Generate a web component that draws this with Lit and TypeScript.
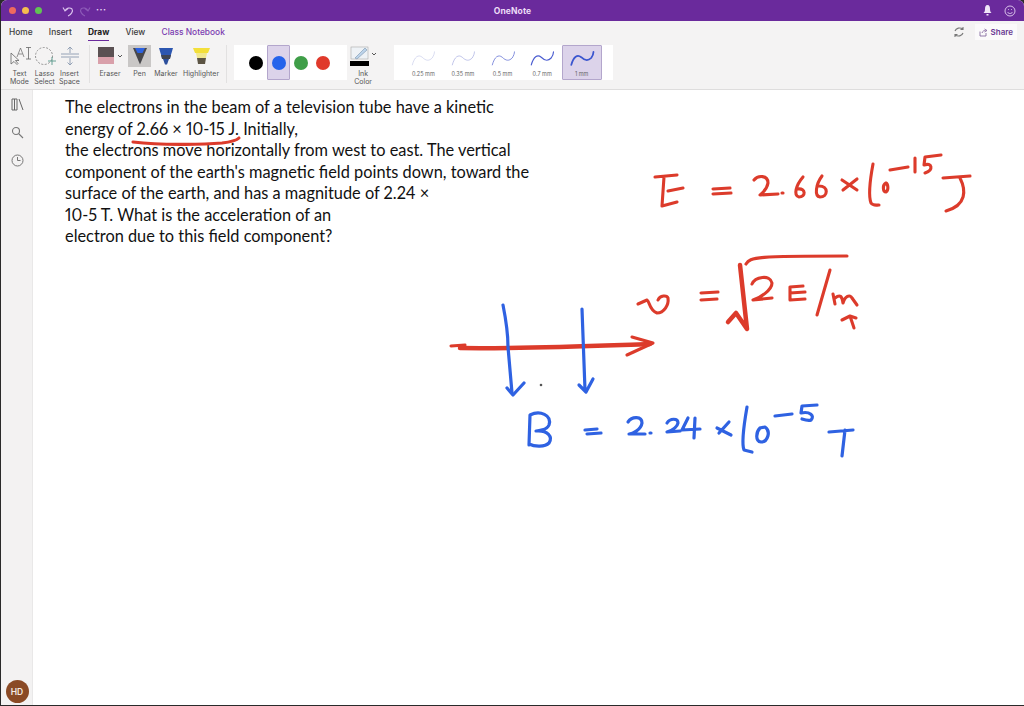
import { LitElement, html, css, svg } from "lit";
import { customElement } from "lit/decorators.js";

const RED = [
  "M133 142C160 145 200 145 222 143C230 142 236 141 239 138",
  "M655 177L677 175M664 177L662 206M668 191L683 188M662 206L677 202",
  "M713 189L730 188M713 194L731 193",
  "M754 180C758 175 768 175 768 183C767 190 762 193 760 195L778 194",
  "M782 193L783 193",
  "M803 177C796 185 793 196 799 197C806 197 806 188 798 189",
  "M822 176C816 184 814 196 820 197C828 197 829 186 819 186",
  "M842 180L857 190M857 179L843 190",
  "M873 164C870 180 868 195 871 203C873 206 876 205 879 205",
  "M886 183C882 185 883 192 886 192C889 190 888 184 886 183",
  "M890 170L908 167M915 158L915 172",
  "M941 155L925 157L924 165C932 162 934 170 925 173",
  "M943 178L970 176M960 178C966 190 967 205 946 211",
  "M638 304L647 300C650 302 649 310 657 313C664 313 669 305 668 298C667 295 660 295 658 300",
  "M701 293L718 292M701 300L717 299",
  "M746 264C750 257 757 256 847 256",
  "M752 284C755 277 770 274 772 283C772 290 760 298 753 300L772 298",
  "M790 287L790 300M790 287L803 286M790 293L805 292M790 300L805 299",
  "M830 270L817 315",
  "M833 294L835 304M835 298C840 294 842 296 843 303C845 296 850 294 852 298L857 305",
  "M842 320L850 316L854 328M850 316L856 318",
  "M632 337L653 343L627 355",
  "M451 346L465 345",
];
const RED_THICK = ["M728 322L736 313L747 329L740 265", "M460 348C520 349 590 346 650 344"];
const BLUE = [
  "M503 305C506 320 508 335 508 347L512 393",
  "M507 388L513 395L524 383",
  "M582 309L585 390M579 385L586 392L593 379",
  "M530 415L529 445M530 415C540 410 552 415 549 425C547 430 538 431 536 431C548 430 553 437 549 443C545 447 535 447 529 444",
  "M585 430L597 429M587 434L601 433",
  "M628 422C632 416 642 416 642 423C641 430 632 434 629 434L645 434M650 433L651 433",
  "M667 423C670 418 678 418 678 423C677 428 670 431 667 432L680 431",
  "M688 418L682 430L700 429M695 418L694 438",
  "M717 428L731 435M729 422L719 433",
  "M747 407C743 430 742 445 744 450L752 452",
  "M760 428C756 432 755 441 761 442C768 442 771 431 765 427L760 428",
  "M775 416L792 414",
  "M817 405L802 406L801 413C810 411 815 416 811 420C809 421 805 420 802 419",
  "M829 432L853 430M845 430L842 456",
];

const LINES = [
  "The electrons in the beam of a television tube have a kinetic",
  "energy of 2.66 × 10-15 J. Initially,",
  "the electrons move horizontally from west to east. The vertical",
  "component of the earth's magnetic field points down, toward the",
  "surface of the earth, and has a magnitude of 2.24 ×",
  "10-5 T. What is the acceleration of an",
  "electron due to this field component?",
];

const WAVE = "M3 20C6 9 11 6 16 10C21 15 25 15 29 11C31 8 32 5 32 3";
const SIZES: [string, number, string, boolean][] = [
  ["0.25 mm", 0.6, "#aeb4e0", false],
  ["0.35 mm", 0.8, "#9aa2dc", false],
  ["0.5 mm", 1.1, "#6f7cd8", false],
  ["0.7 mm", 1.5, "#4a5cd0", false],
  ["1 mm", 2.3, "#3a55cf", true],
];
const COLORS: [string, boolean][] = [["#000", false], ["#2563eb", true], ["#3f9e48", false], ["#e0392b", false]];

@customElement("app-root")
export class AppRoot extends LitElement {
  static styles = css`
    :host { display: block; width: 1024px; height: 706px; background: #2a2a2a; overflow: hidden; position: relative;
      font-family: Inter, "Liberation Sans", sans-serif; }
    .win { margin-left: 1px; height: 705px; display: flex; flex-direction: column; background: #fff; border-radius: 6px 6px 0 0; overflow: hidden; }
    .title { height: 21px; flex: none; background: #6a2a9c; display: grid; grid-template-columns: 1fr auto 1fr; align-items: center; color: #ecdcf7; }
    .title-l { display: flex; align-items: center; padding-left: 8px; }
    .light { width: 7px; height: 7px; border-radius: 50%; margin-right: 6px; }
    .undo { margin-left: 14px; display: flex; align-items: center; gap: 5px; }
    .app { font-size: 8.5px; font-weight: 700; letter-spacing: .1px; }
    .title-r { display: flex; justify-content: flex-end; align-items: center; gap: 12px; padding-right: 8px; }
    .tabs { height: 24px; flex: none; background: #f4f3f3; display: flex; align-items: center; justify-content: space-between; padding: 0 7px 2px 8px; box-sizing: border-box; }
    .tab-list { display: flex; gap: 16.200px; font-size: 8.400px; font-weight: 500; color: #3c3c3c; }
    .tab { padding: 3px 0 3px; border-bottom: 1.500px solid transparent; }
    .tab.on { font-weight: 700; border-color: #6a2a9c; color: #222; }
    .tab.cn { color: #7a3bb0; }
    .share-wrap { display: flex; align-items: center; gap: 10px; }
    .share { background: #fbfafb; display: flex; align-items: center; gap: 3px; padding: 3px 4px; color: #6a3a94; font-size: 8px; font-weight: 600; }
    .ribbon { height: 44px; flex: none; background: #f4f3f3; border-bottom: 1px solid #dedddd; display: flex; padding-left: 6px; }
    .tool { display: flex; flex-direction: column; align-items: center; width: 25px; font-size: 7px; line-height: 8px; color: #555; text-align: center; }
    .tool .ic { height: 22px; display: flex; align-items: center; justify-content: center; flex: none; margin-bottom: 3px; }
    .sep { width: 1px; height: 38px; background: #e2e1e1; margin: 0 7px; flex: none; }
    .sep.tight { margin-right: 7px; margin-left: 6px; }
    .w26 { width: 26px; } .w23 { width: 23px; } .w38 { width: 38px; margin-left: 2px; } .w27 { width: 27px; margin: 0 17px 0 3px; }
    .m1 { margin-right: 5px; } .m2 { margin-right: 1px; margin-left: 2px; }
    .pen-on .ic { background: #c9c7c6; width: 23px; }
    .group { background: #fff; height: 35px; display: flex; align-items: center; flex: none; padding: 0 12px 0 11px; }
    .swatch { width: 22.400px; height: 35px; display: flex; align-items: center; justify-content: center; box-sizing: border-box; }
    .on-box { background: #dcd3ea; border: 1px solid #b3a6cc; border-radius: 1px; }
    .dot { width: 14px; height: 14px; border-radius: 50%; }
    .sizes { padding: 0 11px 0 10px; width: 219px; box-sizing: border-box; }
    .size { width: 39.600px; height: 35px; box-sizing: border-box; display: flex; flex-direction: column; align-items: center; justify-content: center; font-size: 5.500px; color: #666; gap: 3px; }
    .main { flex: 1; display: flex; min-height: 0; }
    .side { width: 32px; flex: none; background: #f3f2f2; border-right: 1px solid #e9e8e8; display: flex; flex-direction: column; align-items: center; box-sizing: border-box; padding: 8px 0 2px 1px; gap: 10px; }
    .side svg { flex: none; margin-top: 5px; }
    .side svg:first-child { margin-top: 0; }
    .avatar { margin-top: auto; width: 23px; height: 23px; border-radius: 50%; background: #8a4a25; color: #f4e9e2; font-size: 8.500px; font-weight: 600; display: flex; align-items: center; justify-content: center; }
    .page { flex: 1; padding: 6px 0 0 32px; font-family: Lato, "Liberation Sans", sans-serif; font-size: 16.350px; line-height: 21.500px; color: #111; font-variant-numeric: proportional-nums; }
    .ink { position: absolute; left: 0; top: 0; pointer-events: none; }
  `;

  render() {
    return html`<div class="win">
      <div class="title">
        <div class="title-l">
          <span class="light" style="background:#ee6a5f"></span>
          <span class="light" style="background:#f5bd4f"></span>
          <span class="light" style="background:#61c354"></span>
          <div class="undo">
            <svg width="12" height="12" viewBox="0 0 12 12" fill="none" stroke="#dcc4ee" stroke-width="1.100"><path d="M1 2.500L3 6L6 3.500M3 6C4 3 8 2 10 4C11.500 6 9 10 6 11"/></svg>
            <svg width="12" height="12" viewBox="0 0 12 12" fill="none" stroke="#8d5bb8" stroke-width="1.100"><path d="M11 2.500L9 6L6 3.500M9 6C8 3 4 2 2 4C.5 6 3 10 6 11"/></svg>
            <span style="font-size:9px;font-weight:700;letter-spacing:.5px;margin-top:-3px">···</span>
          </div>
        </div>
        <div class="app">OneNote</div>
        <div class="title-r">
          <svg width="9" height="11" viewBox="0 0 9 11" fill="#f0e4f8"><path d="M4.500 0C2.500 0 2 2 2 4C2 6 1.500 7 .5 8H8.500C7.500 7 7 6 7 4C7 2 6.500 0 4.500 0ZM3.500 9H5.500V10.500H3.500Z"/></svg>
          <svg width="12" height="12" viewBox="0 0 12 12" fill="none" stroke="#e3d0f1" stroke-width=".9"><circle cx="6" cy="6" r="5"/><path d="M3.500 7C4.500 9 7.500 9 8.500 7M4 4.500H4.800M7.200 4.500H8"/></svg>
        </div>
      </div>
      <div class="tabs">
        <div class="tab-list">
          <span class="tab">Home</span><span class="tab">Insert</span><span class="tab on">Draw</span><span class="tab">View</span><span class="tab cn">Class Notebook</span>
        </div>
        <div class="share-wrap">
          <svg width="12" height="12" viewBox="0 0 12 12" fill="none" stroke="#777" stroke-width="1.100"><path d="M2 5C3 2 7 1 10 3M10 7C9 10 5 11 2 9M10 1V3.500H7.500M2 11V8.500H4.500"/></svg>
          <span class="share">
            <svg width="9" height="9" viewBox="0 0 9 9" fill="none" stroke="#7a5a98" stroke-width=".8"><path d="M1 3.500V8H7V5M3 5C3.500 3 5 2.500 6.500 2.500M5.500 1L8 2.500L5.500 4"/></svg>Share
          </span>
        </div>
      </div>
      <div class="ribbon">
        <div class="tool"><div class="ic"><svg width="25" height="20" viewBox="0 0 25 20" fill="none" stroke="#666" stroke-width=".8"><path d="M4 7V18L7 15.500L10 18.500L11 17.500L8.500 14.500H12Z"/><path d="M10 11L13.500 2L17 11M11.500 8H15.500" stroke-width=".7"/><path d="M19 1.500H24M21.500 1.500V13M19 13H24"/></svg></div>Text Mode</div>
        <div class="tool"><div class="ic"><svg width="24" height="20" viewBox="0 0 24 20" fill="none" stroke="#888" stroke-width=".9"><circle cx="11" cy="10" r="8.500" stroke-dasharray="2 1.500"/><path d="M19 11V19M15 15H23" stroke="#5a9a8c"/></svg></div>Lasso Select</div>
        <div class="tool"><div class="ic"><svg width="22" height="20" viewBox="0 0 22 20" fill="none" stroke="#8a9ab0" stroke-width=".9"><path d="M2 8H20M2 11H20M11 1V7M8.500 3.500L11 1L13.500 3.500M11 12V19M8.500 16.500L11 19L13.500 16.500"/></svg></div>Insert Space</div>
        <div class="sep"></div>
        <div class="tool w26 m1"><div class="ic"><svg width="26" height="18" viewBox="0 0 26 18"><rect x="1" y="0" width="16" height="10" fill="#5a5052"/><rect x="1" y="10" width="16" height="7" fill="#d9a0aa"/><path d="M21 8L23 10L25 8" fill="none" stroke="#555"/></svg></div>Eraser</div>
        <div class="tool w23 pen-on"><div class="ic"><svg width="16" height="18" viewBox="0 0 16 18"><path d="M1 1H15L8 17.500Z" fill="#47474b"/><path d="M3 1H13L10.500 6H5.500Z" fill="#2c62e0"/></svg></div>Pen</div>
        <div class="tool w26 m2"><div class="ic"><svg width="14" height="18" viewBox="0 0 14 18"><path d="M0 1H14L11 11H3Z" fill="#2c56b0"/><path d="M2 8H12L11 12H3Z" fill="#3f4552"/><path d="M4 12H10L8 17.500H6Z" fill="#2c4f9c"/></svg></div>Marker</div>
        <div class="tool w38"><div class="ic"><svg width="17" height="18" viewBox="0 0 17 18"><path d="M0 1H17L15 6H2Z" fill="#f3df3a"/><path d="M3 6H14L13 11H4Z" fill="#f1e88e"/><path d="M4 11H13L12 17H5Z" fill="#5c5444"/></svg></div>Highlighter</div>
        <div class="sep tight"></div>
        <div class="group">
          ${COLORS.map(([c, on]) => html`<div class="swatch ${on ? "on-box" : ""}"><span class="dot" style="background:${c}"></span></div>`)}
        </div>
        <div class="tool w27"><div class="ic"><svg width="27" height="20" viewBox="0 0 27 20"><rect x="1" y="1" width="17" height="12" fill="#eef2f6" stroke="#aaa" stroke-width=".6"/><path d="M5 12L15 2L17 4L7 13Z" fill="#bcd3ea" stroke="#7a93ad" stroke-width=".6"/><rect x="0" y="15" width="19" height="5" fill="#000"/><path d="M22 7L24 9L26 7" fill="none" stroke="#555"/></svg></div>Ink Color</div>
        <div class="group sizes">
          ${SIZES.map(([l, w, c, on]) => html`<div class="size ${on ? "on-box" : ""}"><svg width="26" height="20" viewBox="0 0 34 22" fill="none"><path d="${WAVE}" stroke="${c}" stroke-width="${w}" stroke-linecap="round"/></svg>${l}</div>`)}
        </div>
      </div>
      <div class="main">
        <div class="side">
          <svg width="13" height="13" viewBox="0 0 13 13" fill="none" stroke="#666" stroke-width="1"><path d="M1 1V12M3.500 1V12M6 1V12H1M1 1H6M8 1L12 12"/></svg>
          <svg width="13" height="13" viewBox="0 0 13 13" fill="none" stroke="#777" stroke-width="1.100"><circle cx="5" cy="5" r="3.500"/><path d="M8 8L12 12"/></svg>
          <svg width="13" height="13" viewBox="0 0 13 13" fill="none" stroke="#777" stroke-width="1"><circle cx="6.500" cy="6.500" r="5.500"/><path d="M6.500 3V6.500H9.500"/></svg>
          <div class="avatar">HD</div>
        </div>
        <div class="page">${LINES.map((l) => html`<div>${l}</div>`)}</div>
      </div>
    </div>
    <svg class="ink" width="1024" height="706" viewBox="0 0 1024 706" fill="none" stroke-linecap="round" stroke-linejoin="round">
      ${RED.map((d) => svg`<path d="${d}" stroke="#dc3b2b" stroke-width="3.100"/>`)}
      ${RED_THICK.map((d) => svg`<path d="${d}" stroke="#dc3b2b" stroke-width="4.500"/>`)}
      ${BLUE.map((d) => svg`<path d="${d}" stroke="#2f62e2" stroke-width="3.200"/>`)}
      <circle cx="541" cy="385" r="1.300" fill="#555"/>
    </svg>`;
  }
}
